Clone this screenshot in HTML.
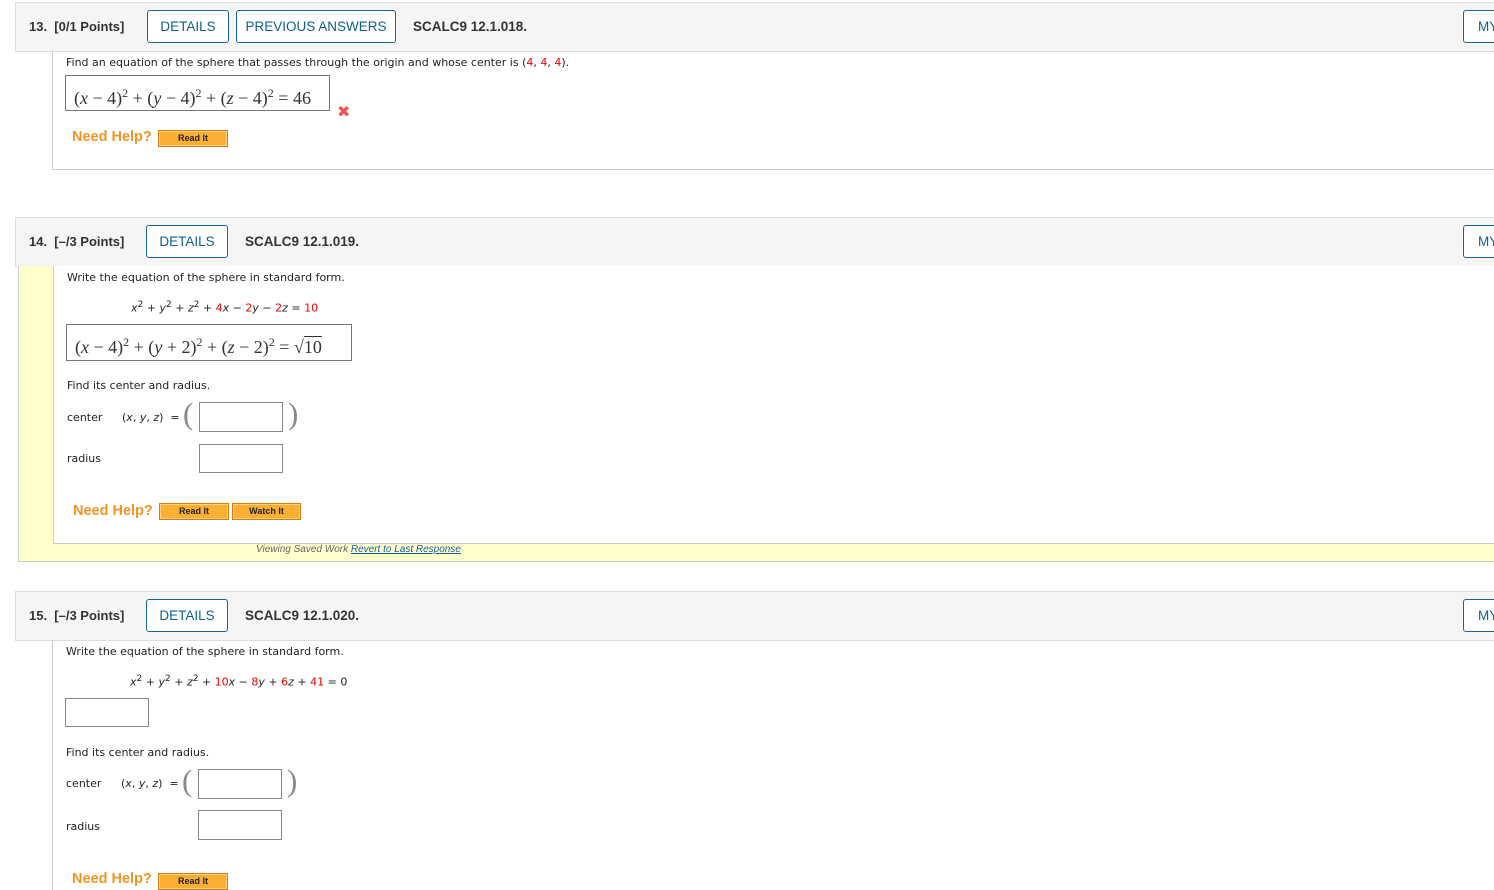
<!DOCTYPE html>
<html><head><meta charset="utf-8"><style>
*{box-sizing:border-box}
body{margin:0;width:1494px;height:884px;overflow:hidden;background:#fff;font-family:"DejaVu Sans",Verdana,sans-serif;position:relative}
.hdr{position:absolute;left:15px;right:-10px;height:50px;background:#f5f5f5;border:1px solid #ddd;border-right:none}
.num{position:absolute;top:16px;font-size:13px;font-weight:bold;color:#333;font-family:"Liberation Sans",sans-serif}
.btn{position:absolute;top:7px;height:33px;border:1px solid #1a6496;border-radius:3px;background:#fff;color:#0e5f8f;font-size:13.5px;line-height:31px;text-align:center;font-family:"Liberation Sans",sans-serif}
.code{position:absolute;top:16px;font-size:13.5px;font-weight:bold;color:#333;font-family:"Liberation Sans",sans-serif}
.t{position:absolute;font-size:11px;color:#222;white-space:nowrap}
.red{color:#e00}
.math{position:absolute;border:1px solid #777;background:#fff;font-family:"Liberation Serif",serif;font-size:18px;color:#333;padding:0 8px;white-space:nowrap}
.math sup{font-size:12px}
.in{position:absolute;width:84px;height:30px;border:1px solid #888;background:#fff}
.nh{position:absolute;font-size:14.5px;font-weight:bold;color:#f39425;font-family:"Liberation Sans",sans-serif}
.ob{position:absolute;height:17px;background:#fbb034;border:1px solid #d57c1a;font-size:9px;font-weight:bold;color:#222;text-align:center;line-height:15px;box-shadow:inset 0 0 0 1px #fdd27a;font-family:"Liberation Sans",sans-serif}
.par{position:absolute;font-family:"Liberation Serif",serif;font-size:31px;color:#888}
</style></head><body>

<div class="hdr" style="top:2px">
 <div class="num" style="left:13px">13.&nbsp; [0/1 Points]</div>
 <div class="btn" style="left:131px;width:82px">DETAILS</div>
 <div class="btn" style="left:220px;width:160px">PREVIOUS ANSWERS</div>
 <div class="code" style="left:397px">SCALC9 12.1.018.</div>
 <div class="btn" style="left:1447px;width:60px;text-align:left;padding-left:14px">MY</div>
</div>
<div style="position:absolute;left:52px;top:51px;width:1450px;height:119px;border-left:1px solid #ccc;border-bottom:1px solid #ccc"></div>
<div class="t" style="left:66px;top:56px">Find an equation of the sphere that passes through the origin and whose center is (<span class="red">4</span>, <span class="red">4</span>, <span class="red">4</span>).</div>
<div class="math" style="left:65px;top:75px;width:265px;height:36px;line-height:34px">(<i>x</i> − 4)<sup>2</sup> + (<i>y</i> − 4)<sup>2</sup> + (<i>z</i> − 4)<sup>2</sup> = 46</div>
<div style="position:absolute;left:337px;top:102px;color:#e55;font-size:16px;font-weight:bold">✖</div>
<div class="nh" style="left:72px;top:129px">Need Help?</div>
<div class="ob" style="left:158px;top:130px;width:70px">Read It</div>

<div class="hdr" style="top:217px">
 <div class="num" style="left:13px">14.&nbsp; [–/3 Points]</div>
 <div class="btn" style="left:130px;width:82px">DETAILS</div>
 <div class="code" style="left:229px">SCALC9 12.1.019.</div>
 <div class="btn" style="left:1447px;width:60px;text-align:left;padding-left:14px">MY</div>
</div>
<div style="position:absolute;left:18px;top:266px;width:1490px;height:296px;background:#ffffcc;border:1px solid #ccc;border-top:none"></div>
<div style="position:absolute;left:53px;top:266px;width:1450px;height:278px;background:#fff;border-left:1px solid #ccc;border-bottom:1px solid #ccc"></div>
<div style="position:absolute;left:256px;top:544px;font-size:10px;font-style:italic;color:#666;font-family:'Liberation Sans',sans-serif">Viewing Saved Work <span style="color:#1a5b9e;text-decoration:underline">Revert to Last Response</span></div>
<div class="t" style="left:67px;top:271px">Write the equation of the sphere in standard form.</div>
<div class="t" style="left:131px;top:300px"><i>x</i><sup style="font-size:9px">2</sup> + <i>y</i><sup style="font-size:9px">2</sup> + <i>z</i><sup style="font-size:9px">2</sup> + <span class="red">4</span><i>x</i> − <span class="red">2</span><i>y</i> − <span class="red">2</span><i>z</i> = <span class="red">10</span></div>
<div class="math" style="left:66px;top:324px;width:286px;height:37px;line-height:35px">(<i>x</i> − 4)<sup>2</sup> + (<i>y</i> + 2)<sup>2</sup> + (<i>z</i> − 2)<sup>2</sup> = √<span style="text-decoration:overline">10</span></div>
<div class="t" style="left:67px;top:379px">Find its center and radius.</div>
<div class="t" style="left:67px;top:411px">center</div>
<div class="t" style="left:122px;top:411px">(<i>x</i>, <i>y</i>, <i>z</i>)&nbsp; =</div>
<div class="par" style="left:183px;top:396px">(</div>
<div class="in" style="left:199px;top:402px"></div>
<div class="par" style="left:288px;top:396px">)</div>
<div class="t" style="left:67px;top:452px">radius</div>
<div class="in" style="left:199px;top:444px;height:29px"></div>
<div class="nh" style="left:73px;top:503px">Need Help?</div>
<div class="ob" style="left:159px;top:503px;width:70px">Read It</div>
<div class="ob" style="left:232px;top:503px;width:69px">Watch It</div>

<div class="hdr" style="top:591px">
 <div class="num" style="left:13px">15.&nbsp; [–/3 Points]</div>
 <div class="btn" style="left:130px;width:82px">DETAILS</div>
 <div class="code" style="left:229px">SCALC9 12.1.020.</div>
 <div class="btn" style="left:1447px;width:60px;text-align:left;padding-left:14px">MY</div>
</div>
<div style="position:absolute;left:52px;top:640px;width:1px;height:250px;background:#ccc"></div>
<div class="t" style="left:66px;top:645px">Write the equation of the sphere in standard form.</div>
<div class="t" style="left:130px;top:674px"><i>x</i><sup style="font-size:9px">2</sup> + <i>y</i><sup style="font-size:9px">2</sup> + <i>z</i><sup style="font-size:9px">2</sup> + <span class="red">10</span><i>x</i> − <span class="red">8</span><i>y</i> + <span class="red">6</span><i>z</i> + <span class="red">41</span> = 0</div>
<div class="in" style="left:65px;top:698px;height:29px"></div>
<div class="t" style="left:66px;top:746px">Find its center and radius.</div>
<div class="t" style="left:66px;top:777px">center</div>
<div class="t" style="left:121px;top:777px">(<i>x</i>, <i>y</i>, <i>z</i>)&nbsp; =</div>
<div class="par" style="left:182px;top:763px">(</div>
<div class="in" style="left:198px;top:769px"></div>
<div class="par" style="left:287px;top:763px">)</div>
<div class="t" style="left:66px;top:820px">radius</div>
<div class="in" style="left:198px;top:810px"></div>
<div class="nh" style="left:72px;top:871px">Need Help?</div>
<div class="ob" style="left:158px;top:873px;width:70px">Read It</div>
</body></html>
